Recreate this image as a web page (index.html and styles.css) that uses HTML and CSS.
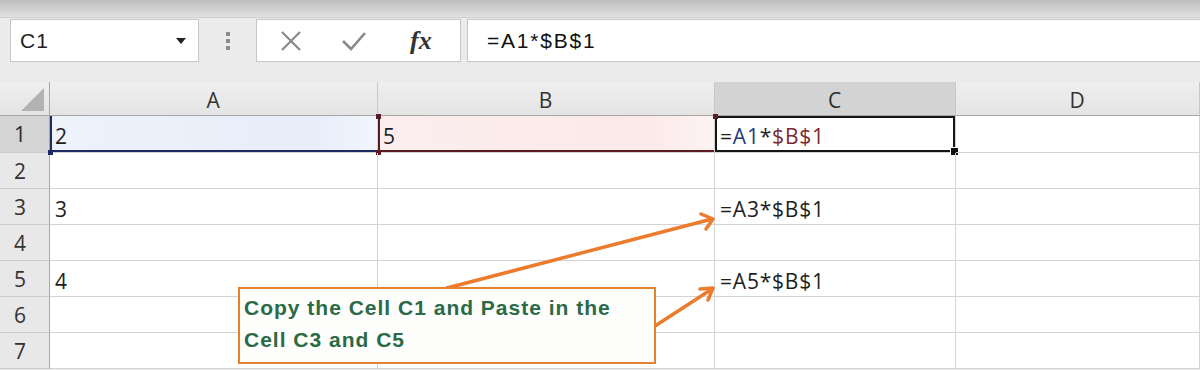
FILE: index.html
```html
<!DOCTYPE html>
<html lang="en">
<head>
<meta charset="UTF-8">
<title>Relative and absolute references</title>
<link rel="stylesheet" href="styles.css">
</head>
<body>

<div class="app">
    <div class="topband"></div>

    <div class="fbar">
        <div class="namebox">
            <span>C1</span>
            <span class="caret"></span>
        </div>
        <div class="grip"><i></i><i></i><i></i></div>
        <div class="fbuttons">
            <svg class="ico" width="26" height="26" viewBox="0 0 26 26">
                <path d="M4 4 L22 22 M22 4 L4 22" stroke="#8a8a8a" stroke-width="2.2" fill="none"/>
            </svg>
            <svg class="ico" width="28" height="26" viewBox="0 0 28 26">
                <path d="M3 13 L11 21 L25 5" stroke="#8a8a8a" stroke-width="2.6" fill="none"/>
            </svg>
            <span class="fx">fx</span>
        </div>
        <div class="finput">=A1*$B$1</div>
    </div>

    <div class="gap"></div>

    <div class="sheet">
        <div class="corner"><span class="tri"></span></div>
        <div class="colhead">A</div>
        <div class="colhead">B</div>
        <div class="colhead active">C</div>
        <div class="colhead">D</div>

        <div class="rowhead active">1</div>
        <div class="cell ref-a">2</div>
        <div class="cell ref-b">5</div>
        <div class="cell selected">=<span class="r-blue">A1</span>*<span class="r-red">$B$1</span></div>
        <div class="cell"></div>

        <div class="rowhead">2</div>
        <div class="cell"></div><div class="cell"></div><div class="cell"></div><div class="cell"></div>

        <div class="rowhead">3</div>
        <div class="cell">3</div><div class="cell"></div><div class="cell">=A3*$B$1</div><div class="cell"></div>

        <div class="rowhead">4</div>
        <div class="cell"></div><div class="cell"></div><div class="cell"></div><div class="cell"></div>

        <div class="rowhead">5</div>
        <div class="cell">4</div><div class="cell"></div><div class="cell">=A5*$B$1</div><div class="cell"></div>

        <div class="rowhead">6</div>
        <div class="cell"></div><div class="cell"></div><div class="cell"></div><div class="cell"></div>

        <div class="rowhead">7</div>
        <div class="cell"></div><div class="cell"></div><div class="cell"></div><div class="cell"></div>
    </div>

    <!-- annotation drawn over the sheet -->
    <svg class="arrows" width="1200" height="370" viewBox="0 0 1200 370">
        <g stroke="#ec7b2c" stroke-width="3.5" fill="none" stroke-linecap="round" stroke-linejoin="round">
            <path d="M447 288 L712 219"/>
            <path d="M701 214 L713 219 L706 229"/>
            <path d="M655 326 L712 289"/>
            <path d="M700 289 L713 288 L708 300"/>
        </g>
    </svg>
    <div class="callout">Copy the Cell C1 and Paste in the<br>Cell C3 and C5</div>
</div>

</body>
</html>
```

FILE: styles.css
```css
body {
    margin: 0;
    padding: 0;
    background-color: #fff;
    font-family: "Open Sans", sans-serif;
}

.app {
    position: relative;
    width: 1200px;
    height: 370px;
    overflow: hidden;
    background-color: #ebebeb;
}

.topband {
    height: 18px;
    background: linear-gradient(#bdbdbd, #d6d6d6 70%, #e2e2e2);
    border-bottom: 1px solid #cfcfcf;
    box-sizing: border-box;
}

.fbar {
    display: flex;
    align-items: flex-start;
    height: 44px;
    padding: 1px 0 0 10px;
    box-sizing: border-box;
    background-color: #ececec;
}

.namebox,
.fbuttons,
.finput {
    height: 43px;
    background-color: #fff;
    border: 1px solid #c6c6c6;
    box-sizing: border-box;
    display: flex;
    align-items: center;
}

.namebox {
    width: 189px;
    padding: 0 12px 0 9px;
    justify-content: space-between;
    font-family: "Liberation Sans", sans-serif;
    font-size: 21px;
    letter-spacing: 1px;
    color: #222;
}

.caret {
    width: 0;
    height: 0;
    border-left: 5px solid transparent;
    border-right: 5px solid transparent;
    border-top: 6px solid #222;
}

.grip {
    width: 57px;
    height: 43px;
    display: flex;
    flex-direction: column;
    align-items: center;
    justify-content: center;
    gap: 3px;
}

.grip i {
    display: block;
    width: 4px;
    height: 4px;
    background-color: #8c8c8c;
}

.fbuttons {
    width: 205px;
    padding: 0 0 0 21px;
    gap: 36px;
}

.fx {
    font-family: "Liberation Serif", serif;
    font-style: italic;
    font-weight: bold;
    font-size: 26px;
    color: #333;
    margin-left: 6px;
}

.finput {
    flex: 1;
    margin-left: 6px;
    padding-left: 19px;
    font-family: "Liberation Sans", sans-serif;
    font-size: 21px;
    letter-spacing: 1.8px;
    color: #111;
    border-right: none;
}

.gap {
    height: 20px;
    background-color: #ebebeb;
}

.sheet {
    display: grid;
    grid-template-columns: 50px 328px 337px 241px 244px;
    grid-template-rows: 34px 37px repeat(6, 36px);
    background-color: #fff;
    font-size: 21px;
    letter-spacing: 0.8px;
    color: #1e1e1e;
}

.corner,
.colhead,
.rowhead {
    background: linear-gradient(#efefef, #e4e4e4);
    color: #333;
    box-sizing: border-box;
    display: flex;
    align-items: center;
    justify-content: center;
}

.corner {
    position: relative;
    border-right: 1px solid #a9a9a9;
    border-bottom: 1px solid #a9a9a9;
}

.tri {
    position: absolute;
    right: 5px;
    bottom: 4px;
    width: 0;
    height: 0;
    border-left: 23px solid transparent;
    border-bottom: 23px solid #b2b2b2;
}

.colhead {
    border-right: 1px solid #c8c8c8;
    border-bottom: 1px solid #a6a6a6;
    padding-top: 2px;
}

.colhead.active {
    background: #d3d3d3;
    color: #2a2a2a;
}

.rowhead {
    border-right: 1px solid #a6a6a6;
    border-bottom: 1px solid #c9c9c9;
    background: #e8e8e8;
    padding-right: 8px;
}

.rowhead.active {
    background: #d4d4d4;
    color: #2a2a2a;
}

.cell {
    position: relative;
    border-right: 1px solid #d4d4d4;
    border-bottom: 1px solid #d4d4d4;
    box-sizing: border-box;
    padding: 4px 0 0 5px;
    display: flex;
    align-items: center;
    white-space: nowrap;
}

/* range highlight for A1 / B1 references */
.ref-a {
    background: linear-gradient(90deg, #eef2fb, #e7edf9 80%, #f2f5fc);
    box-shadow: inset 2px 0 0 #1d2a63, inset 0 -2px 0 #1d2a63;
}

.ref-b {
    background: linear-gradient(90deg, #fbeeee, #fce9e9 80%, #fdf3f3);
    box-shadow: inset 2px 0 0 #5a1c22, inset 0 -2px 0 #5a1c22;
}

.ref-a::before,
.ref-b::before,
.ref-b::after,
.selected::before {
    content: "";
    position: absolute;
    width: 5px;
    height: 5px;
    left: -2px;
}

.ref-a::before {
    bottom: -3px;
    background-color: #1d2a63;
}

.ref-b::before {
    bottom: -3px;
    background-color: #5a1c22;
}

.ref-b::after {
    top: -2px;
    background-color: #5a1c22;
}

.selected {
    box-shadow: inset 0 0 0 2px #151515;
}

.selected::before {
    top: -2px;
    background-color: #5a1c22;
}

.selected::after {
    content: "";
    position: absolute;
    right: -4px;
    bottom: -4px;
    width: 7px;
    height: 7px;
    background-color: #111;
    border: 1px solid #fff;
}

.r-blue {
    color: #263b80;
}

.r-red {
    color: #7b2a31;
}

.arrows {
    position: absolute;
    left: 0;
    top: 0;
}

.callout {
    position: absolute;
    left: 238px;
    top: 287px;
    width: 418px;
    height: 77px;
    box-sizing: border-box;
    border: 2px solid #e2822f;
    background-color: #fdfdfb;
    padding: 3px 0 0 4px;
    font-family: "Liberation Sans", sans-serif;
    font-weight: bold;
    font-size: 21px;
    letter-spacing: 1px;
    line-height: 32px;
    color: #2b6a47;
}
```
